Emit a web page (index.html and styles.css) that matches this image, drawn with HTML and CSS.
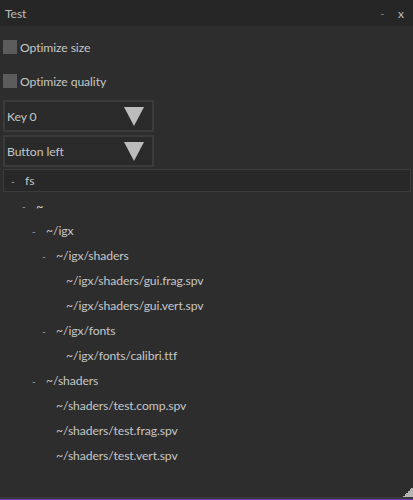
FILE: index.html
```html
<!DOCTYPE html>
<html>
<head>
<meta charset="utf-8">
<link rel="stylesheet" href="styles.css">
</head>
<body>
<div class="window">
  <div class="titlebar">
    <span class="title">Test</span>
    <span class="tb-btns"><span class="tb-min">-</span><span class="tb-close">x</span></span>
  </div>
  <div class="content">
    <div class="checks">
      <label class="check"><span class="box"></span><span>Optimize size</span></label>
      <label class="check"><span class="box"></span><span>Optimize quality</span></label>
    </div>
    <div class="combos">
      <div class="combo"><span>Key 0</span><span class="arrow"></span></div>
      <div class="combo"><span>Button left</span><span class="arrow"></span></div>
    </div>
    <div class="header"><span class="bullet">-</span><span>fs</span></div>
    <div class="tree">
      <div class="row l1"><span class="bullet">-</span><span class="tilde">~</span></div>
      <div class="row l2"><span class="bullet">-</span><span>~/igx</span></div>
      <div class="row l3"><span class="bullet">-</span><span>~/igx/shaders</span></div>
      <div class="row leaf4"><span>~/igx/shaders/gui.frag.spv</span></div>
      <div class="row leaf4"><span>~/igx/shaders/gui.vert.spv</span></div>
      <div class="row l3"><span class="bullet">-</span><span>~/igx/fonts</span></div>
      <div class="row leaf4"><span>~/igx/fonts/calibri.ttf</span></div>
      <div class="row l2"><span class="bullet">-</span><span>~/shaders</span></div>
      <div class="row leaf3"><span>~/shaders/test.comp.spv</span></div>
      <div class="row leaf3"><span>~/shaders/test.frag.spv</span></div>
      <div class="row leaf3"><span>~/shaders/test.vert.spv</span></div>
    </div>
  </div>
  <div class="footer"></div>
  <div class="grip"></div>
</div>
</body>
</html>
```
FILE: styles.css
```css
* { box-sizing: border-box; }
html, body { margin: 0; padding: 0; background: #2d2d2d; }
body {
  font-family: Lato, "Liberation Sans", sans-serif;
  font-size: 12.2px;
  letter-spacing: -0.1px;
  color: #c6c6c6;
}
.window {
  position: relative;
  width: 413px;
  height: 500px;
  display: flex;
  flex-direction: column;
  background: #2d2d2d;
  overflow: hidden;
}
.titlebar {
  height: 26px;
  flex: none;
  background: #262626;
  display: flex;
  align-items: center;
  justify-content: space-between;
  padding: 0 9px 0 5px;
  color: #bdbdbd;
}
.tb-btns { display: flex; gap: 14px; align-items: center; }
.tb-min { font-size: 10px; color: #9a9a9a; }
.tb-close { font-size: 12px; color: #c0c0c0; }
.content {
  flex: 1;
  display: flex;
  flex-direction: column;
  padding: 14px 2px 0 3px;
}
.checks { display: flex; flex-direction: column; gap: 20px; }
.check { display: flex; align-items: center; gap: 3px; height: 14px; }
.box { width: 14px; height: 14px; background: #5c5c5c; flex: none; }
.combos { display: flex; flex-direction: column; gap: 3px; margin-top: 12px; }
.combo {
  width: 151px;
  height: 32px;
  border: 2px solid #3b3b3b;
  background: #2a2a2a;
  display: flex;
  align-items: center;
  justify-content: space-between;
  padding: 0 8px 0 2px;
}
.arrow {
  width: 0; height: 0;
  border-left: 10px solid transparent;
  border-right: 10px solid transparent;
  border-top: 19px solid #bcbcbc;
}
.header {
  margin-top: 2px;
  height: 23px;
  border: 1px solid #3b3b3b;
  background: #282828;
  display: flex;
  align-items: center;
  padding-left: 7px;
  width: 408px;
}
.tree { display: flex; flex-direction: column; margin-top: 1px; }
.row { height: 25px; display: flex; align-items: center; }
.bullet { width: 14px; flex: none; font-size: 10px; color: #a8a8a8; }
.tilde { font-size: 13px; }
.l1 { padding-left: 19px; }
.l2 { padding-left: 29px; }
.l3 { padding-left: 39px; }
.leaf3 { padding-left: 53px; }
.leaf4 { padding-left: 63px; }
.footer {
  height: 3px;
  flex: none;
  background: #3a3a3a;
  border-bottom: 1px solid #7a32b8;
}
.grip {
  position: absolute;
  right: 0;
  bottom: 3px;
  width: 10px;
  height: 10px;
  background: linear-gradient(to bottom right, transparent 50%, #b4b4b4 50%);
}
```
